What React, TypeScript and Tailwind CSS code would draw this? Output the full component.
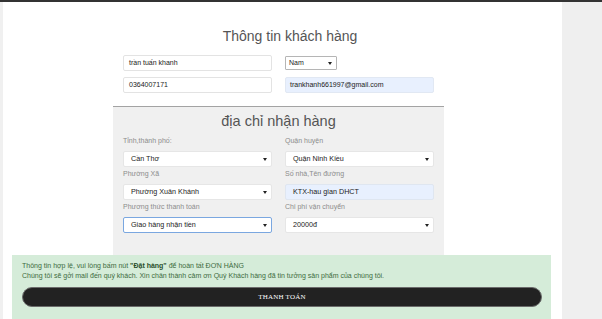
import React from 'react';

const Caret: React.FC = () => (
  <svg width={4} height={3} viewBox="0 0 4 3" className="shrink-0">
    <path d="M0 0 L4 0 L2 3 Z" fill="#222" />
  </svg>
);

interface FieldProps {
  label: string;
  value: string;
  kind?: 'select' | 'input';
  focused?: boolean;
}

const Field: React.FC<FieldProps> = ({ label, value, kind = 'select', focused }) => (
  <div className="flex flex-col">
    <div className="h-[12px] leading-[12px] text-[7px] text-[#8c8c8c] mb-[4px]">{label}</div>
    {kind === 'select' ? (
      <div
        className={
          focused
            ? 'h-[16px] flex items-center justify-between pl-[7px] pr-[4px] bg-white rounded-[2px] border border-[#7aa7e0] text-[7.2px] text-[#222]'
            : 'h-[16px] flex items-center justify-between pl-[7px] pr-[4px] bg-white rounded-[2px] border border-[#e6e6e6] text-[7.2px] text-[#222]'
        }
      >
        <span>{value}</span>
        <Caret />
      </div>
    ) : (
      <div className="h-[16px] flex items-center pl-[7px] bg-[#e8f0fe] rounded-[2px] border border-[#dfe6f0] text-[7.2px] text-[#222]">
        {value}
      </div>
    )}
  </div>
);

export default function App() {
  return (
    <div className="w-[602px] h-[319px] overflow-hidden relative bg-white border-t-2 border-[#333] flex font-['Liberation_Sans',Arial,sans-serif]">
      <div className="w-[3px] bg-[#f0f0f0]" />

      <main className="flex-1 pl-[110px] flex flex-col">
        <div className="w-[331px] flex flex-col flex-1">
          <h1 className="pt-[26px] pl-[23px] text-center text-[14px] leading-[16px] text-[#555]">
            Thông tin khách hàng
          </h1>

          <div className="mt-[11px] px-[10px] grid grid-cols-2 gap-x-[13px] gap-y-[6px]">
            <div className="h-[16px] flex items-center pl-[5px] bg-white rounded-[2px] border border-[#e3e3e3] text-[7px] text-[#222]">
              trần tuấn khanh
            </div>
            <div className="h-[16px] flex items-center">
              <div className="w-[52px] h-[14px] flex items-center justify-between pl-[3px] pr-[4px] bg-white border border-[#b5b5b5] rounded-[1px] text-[7px] text-[#222]">
                <span>Nam</span>
                <Caret />
              </div>
            </div>
            <div className="h-[16px] flex items-center pl-[5px] bg-white rounded-[2px] border border-[#e3e3e3] text-[7px] text-[#222]">
              0364007171
            </div>
            <div className="h-[16px] flex items-center pl-[4px] bg-[#e8f0fe] rounded-[2px] border border-[#e1e8f3] text-[7px] text-[#222]">
              trankhanh661997@gmail.com
            </div>
          </div>

          <div className="mt-[13px] h-px bg-[#a3a3a3]" />

          <section className="flex-1 bg-[#f0f0f0] pt-[4px]">
            <h2 className="text-center text-[14.5px] leading-[20px] text-[#555]">địa chỉ nhận hàng</h2>
            <div className="mt-[4px] px-[10px] grid grid-cols-2 gap-x-[13px] gap-y-[1px]">
              <Field label="Tỉnh,thành phố:" value="Cần Thơ" />
              <Field label="Quận huyện" value="Quận Ninh Kiều" />
              <Field label="Phường Xã" value="Phường Xuân Khánh" />
              <Field label="Số nhà,Tên đường" value="KTX-hau gian DHCT" kind="input" />
              <Field label="Phương thức thanh toán" value="Giao hàng nhận tiền" focused />
              <Field label="Chi phí vận chuyển" value="20000đ" />
            </div>
          </section>
        </div>
      </main>

      <aside className="w-[40px] bg-[#efefef]" />

      <div className="absolute left-[12px] top-[253px] w-[539px] h-[65px] bg-[#d5ecd9] pt-[6px] text-[#3d6b40]">
        <p className="pl-[10px] text-[7px] leading-[10px]">
          Thông tin hợp lệ, vui lòng bấm nút <b className="text-[#2a4f2c]">"Đặt hàng"</b> để hoàn tất ĐƠN HÀNG
        </p>
        <p className="pl-[10px] text-[7px] leading-[10px]">
          Chúng tôi sẽ gởi mail đến quý khách. Xin chân thành cảm ơn Quý Khách hàng đã tin tưởng sản phẩm của chúng tôi.
        </p>
        <div className="mt-[6px] ml-[10px] mr-[9px] h-[20px] rounded-full bg-[#222] border border-[#6b6b6b] flex items-center justify-center">
          <span className="font-['Liberation_Serif',serif] text-[7px] text-white tracking-[0.2px]">THANH TOÁN</span>
        </div>
      </div>
    </div>
  );
}
